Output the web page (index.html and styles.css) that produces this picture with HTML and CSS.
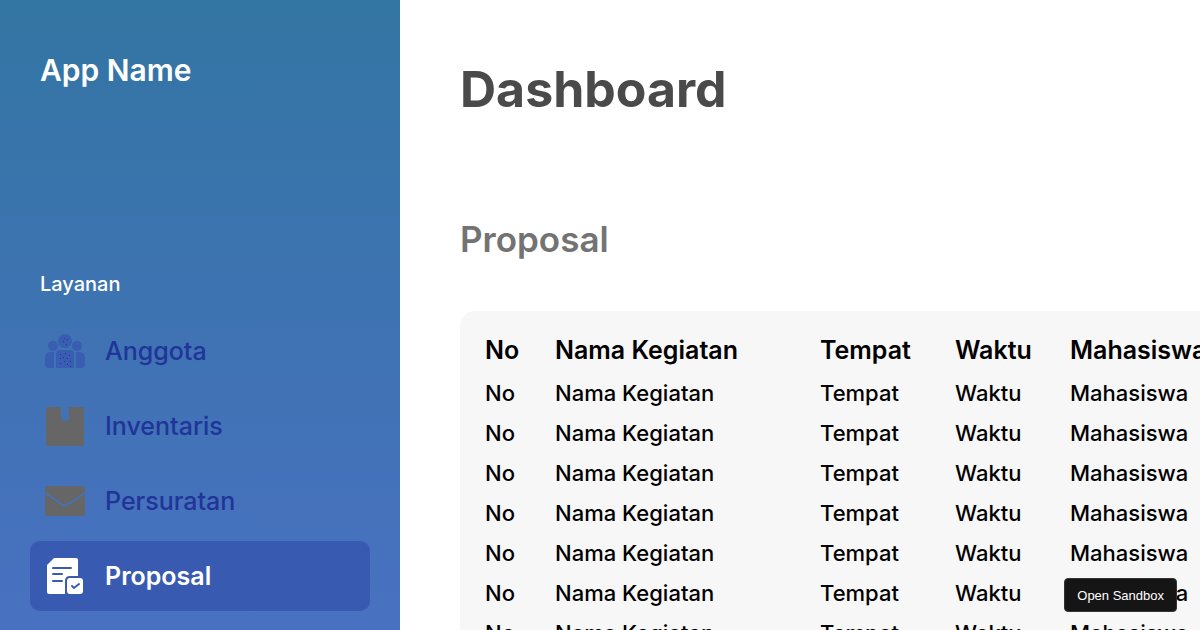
FILE: index.html
```html
<!DOCTYPE html>
<html lang="id">
<head>
    <meta charset="UTF-8">
    <meta name="viewport" content="width=device-width, initial-scale=1.0">
    <title>Dashboard</title>
    <link rel="stylesheet" href="styles.css">
</head>
<body>
    <div class="layout">
        <aside class="sidebar">
            <div class="brand">App Name</div>
            <h3 class="menu-title">Layanan</h3>
            <nav class="menu">
                <a href="#anggota" class="menu-item">
                    <svg class="icon icon-people" viewBox="0 0 40 40" aria-hidden="true">
                        <circle cx="20" cy="10" r="7"/>
                        <circle cx="8" cy="15" r="5"/>
                        <circle cx="32" cy="15" r="5"/>
                        <path d="M11 37V23q0-4 4-4h10q4 0 4 4v14z"/>
                        <path d="M9 21v16H4q-4 0-4-4v-6q0-6 6-6z"/>
                        <path d="M31 21h3q6 0 6 6v6q0 4-4 4h-5z"/>
                        <path class="dots" d="M19 7h1v1h-1zM22 8h1v1h-1zM18 10h1v1h-1zM21 13h1v1h-1zM15 23h1v1h-1zM20 22h1v1h-1zM24 24h1v1h-1zM18 26h1v1h-1zM15 27h1v1h-1zM22 27h1v1h-1zM25 30h1v1h-1zM19 30h1v1h-1zM15 32h1v1h-1zM22 33h1v1h-1zM25 35h1v1h-1z"/>
                    </svg>
                    <span>Anggota</span>
                </a>
                <a href="#inventaris" class="menu-item">
                    <svg class="icon icon-gray" viewBox="0 0 40 40" aria-hidden="true">
                        <path d="M3 1h13v10a4 4 0 0 0 8 0V1h13q2 0 2 2v35q0 2-2 2H3q-2 0-2-2V3q0-2 2-2z"/>
                    </svg>
                    <span>Inventaris</span>
                </a>
                <a href="#persuratan" class="menu-item">
                    <svg class="icon icon-gray" viewBox="0 0 40 40" aria-hidden="true">
                        <path d="M4 5h32q4 0 4 4v2L22 23q-2 1-4 0L0 11V9q0-4 4-4z"/>
                        <path d="M0 13l17 11.500q3 2 6 0L40 13v19q0 3-3 3H3q-3 0-3-3z"/>
                    </svg>
                    <span>Persuratan</span>
                </a>
                <a href="#proposal" class="menu-item active">
                    <svg class="icon icon-white" viewBox="0 0 40 40" aria-hidden="true">
                        <path d="M9 2h22q2 0 2 2v16h-8q-5 0-5 5v13H4q-2 0-2-2V9z"/>
                        <rect x="22" y="22" width="16" height="16" rx="3"/>
                        <path class="lines" d="M8 12h18M8 18h9M8 25h9"/>
                        <path class="lines" d="M27 30l2 2 5-4"/>
                    </svg>
                    <span>Proposal</span>
                </a>
            </nav>
        </aside>

        <main class="content">
            <h1>Dashboard</h1>
            <h2>Proposal</h2>
            <div class="card">
                <table>
                    <colgroup>
                        <col class="col-no">
                        <col class="col-nama">
                        <col class="col-tempat">
                        <col class="col-waktu">
                        <col class="col-mahasiswa">
                    </colgroup>
                    <thead>
                        <tr><th>No</th><th>Nama Kegiatan</th><th>Tempat</th><th>Waktu</th><th>Mahasiswa</th></tr>
                    </thead>
                    <tbody>
                        <tr><td>No</td><td>Nama Kegiatan</td><td>Tempat</td><td>Waktu</td><td>Mahasiswa</td></tr>
                        <tr><td>No</td><td>Nama Kegiatan</td><td>Tempat</td><td>Waktu</td><td>Mahasiswa</td></tr>
                        <tr><td>No</td><td>Nama Kegiatan</td><td>Tempat</td><td>Waktu</td><td>Mahasiswa</td></tr>
                        <tr><td>No</td><td>Nama Kegiatan</td><td>Tempat</td><td>Waktu</td><td>Mahasiswa</td></tr>
                        <tr><td>No</td><td>Nama Kegiatan</td><td>Tempat</td><td>Waktu</td><td>Mahasiswa</td></tr>
                        <tr><td>No</td><td>Nama Kegiatan</td><td>Tempat</td><td>Waktu</td><td>Mahasiswa</td></tr>
                        <tr><td>No</td><td>Nama Kegiatan</td><td>Tempat</td><td>Waktu</td><td>Mahasiswa</td></tr>
                    </tbody>
                </table>
            </div>
        </main>
    </div>

    <button type="button" class="sandbox-btn">Open Sandbox</button>
</body>
</html>
```
FILE: styles.css
```css
* {
    box-sizing: border-box;
}
body {
    margin: 0;
    font-family: Inter, 'Liberation Sans', sans-serif;
    background: white;
    color: black;
}
h1, h2, h3 {
    margin: 0;
}
.layout {
    display: flex;
    height: 100vh;
    overflow: hidden;
}
.sidebar {
    flex: 0 0 400px;
    padding: 50px 30px 0;
    background: linear-gradient(#3375a3, #4971c1);
}
.brand {
    padding: 0 10px;
    font-size: 30px;
    line-height: 40px;
    font-weight: 600;
    color: white;
}
.menu-title {
    margin-top: 180px;
    padding: 0 10px;
    font-size: 20px;
    line-height: 28px;
    font-weight: 500;
    color: white;
}
.menu {
    display: flex;
    flex-direction: column;
    gap: 5px;
    margin-top: 18px;
}
.menu-item {
    display: flex;
    align-items: center;
    gap: 20px;
    height: 70px;
    padding: 0 15px;
    border-radius: 10px;
    font-size: 25px;
    line-height: 29px;
    font-weight: 500;
    color: #203499;
    text-decoration: none;
}
.menu-item.active {
    background: #395ab1;
    color: white;
    font-weight: 600;
}
.icon {
    width: 40px;
    height: 40px;
}
.icon-people {
    fill: #395db0;
}
.icon-people .dots {
    fill: #203499;
}
.icon-gray {
    fill: #666666;
}
.icon-white {
    fill: white;
}
.icon .lines {
    fill: none;
    stroke: #395ab1;
    stroke-width: 2;
    stroke-linecap: round;
}
.content {
    flex: 1;
    min-width: 0;
    padding: 59px 0 0 60px;
}
h1 {
    font-size: 50px;
    line-height: 60px;
    font-weight: 700;
    color: #4a4a4a;
}
h2 {
    margin-top: 98px;
    font-size: 35px;
    line-height: 44px;
    font-weight: 600;
    color: #737373;
}
.card {
    width: max-content;
    min-width: 100%;
    margin-top: 50px;
    padding: 16px 25px;
    border-radius: 15px;
    background: #f7f7f7;
}
table {
    border-collapse: collapse;
    table-layout: fixed;
    width: 785px;
}
.col-no {
    width: 70px;
}
.col-nama {
    width: 265px;
}
.col-tempat {
    width: 135px;
}
.col-waktu {
    width: 115px;
}
.col-mahasiswa {
    width: 200px;
}
th, td {
    padding: 0;
    text-align: left;
}
th {
    height: 46px;
    font-size: 25px;
    font-weight: 600;
}
td {
    height: 40px;
    font-size: 22px;
    font-weight: 500;
}
.sandbox-btn {
    position: fixed;
    right: 23px;
    bottom: 18px;
    height: 34px;
    padding: 0 12px;
    border: 1px solid #343434;
    border-radius: 4px;
    background: #151515;
    color: white;
    font-family: 'Liberation Sans', Arial, sans-serif;
    font-size: 13px;
    cursor: pointer;
}
```
